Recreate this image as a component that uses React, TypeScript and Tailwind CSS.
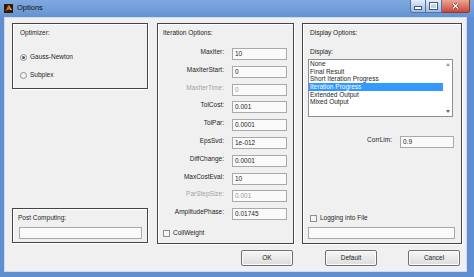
import React from 'react';

interface FieldDef {
  label: string;
  value: string;
  disabled?: boolean;
}

const iterFields: FieldDef[] = [
  { label: 'MaxIter:', value: '10' },
  { label: 'MaxIterStart:', value: '0' },
  { label: 'MaxIterTime:', value: '0', disabled: true },
  { label: 'TolCost:', value: '0.001' },
  { label: 'TolPar:', value: '0.0001' },
  { label: 'EpsSvd:', value: '1e-012' },
  { label: 'DiffChange:', value: '0.0001' },
  { label: 'MaxCostEval:', value: '10' },
  { label: 'ParStepSize:', value: '0.001', disabled: true },
  { label: 'AmplitudePhase:', value: '0.01745' },
];

const displayItems = [
  'None',
  'Final Result',
  'Short Iteration Progress',
  'Iteration Progress',
  'Extended Output',
  'Mixed Output',
];

const panel = 'border border-[#454545] shadow-[inset_1px_1px_0_#ffffff,1px_1px_0_#ffffff]';
const edit = 'h-[12px] border border-[#a9a9a9] bg-[#fafafa] pl-[2px] leading-[10px]';

const Radio = ({ checked, label }: { checked?: boolean; label: string }) => (
  <div className="flex items-center h-[8px]">
    <div className="w-[7px] h-[7px] rounded-full border border-[#8e8f8f] bg-[#f4f4f4] flex items-center justify-center">
      {checked && <div className="w-[3px] h-[3px] rounded-full bg-[#3b5f86]" />}
    </div>
    <span className="ml-[3px]">{label}</span>
  </div>
);

const Check = ({ label }: { label: string }) => (
  <div className="flex items-center h-[8px]">
    <div className="w-[7px] h-[7px] border border-[#8e8f8f] bg-[#f4f4f4]" />
    <span className="ml-[3px]">{label}</span>
  </div>
);

const Button = ({ label, className }: { label: string; className?: string }) => (
  <div
    className={
      'w-[52px] h-[16px] rounded-[2px] border border-[#707070] bg-linear-to-b from-[#f6f6f6] to-[#dcdcdc] flex items-center justify-center shadow-[inset_0_0_0_1px_#fcfcfc] ' +
      (className || '')
    }
  >
    {label}
  </div>
);

const App: React.FC = () => {
  return (
    <div className="w-[474px] h-[277px] bg-[#5f8fd1] flex flex-col overflow-hidden font-['Liberation_Sans',Arial,sans-serif] text-[6.5px] leading-[8px] text-[#1e1e1e]">
      {/* Title bar */}
      <div className="h-[17px] flex items-start bg-linear-to-b from-[#7fa9df] to-[#6593d3]">
        <svg width="9" height="9" viewBox="0 0 9 9" className="ml-[4px] mt-[4px]">
          <rect width="9" height="9" fill="#2a1a10" />
          <path d="M1 7 C3 6 3 2 5 1 C6 3 7 5 8 6 C6 5 4 6 1 7 Z" fill="#e8651c" />
          <path d="M5 1 C6 3 7 5 8 6 L6 6 Z" fill="#f4b14a" />
        </svg>
        <span className="ml-[4px] mt-[4px] text-[7.5px] text-[#111]">Options</span>
        <div className="flex-1" />
        <div className="flex mr-[4px]">
          <div className="w-[16px] h-[13px] rounded-bl-[3px] border border-t-0 border-[#4f74a6] bg-linear-to-b from-[#e4edf8] to-[#9fbbe0] flex items-center justify-center">
            <div className="w-[6px] h-[2px] mt-[4px] bg-white border border-[#445a7a] box-content" />
          </div>
          <div className="w-[16px] h-[13px] border border-t-0 border-l-0 border-[#4f74a6] bg-linear-to-b from-[#e4edf8] to-[#9fbbe0] flex items-center justify-center">
            <div className="w-[7px] h-[6px] border-[1.5px] border-white outline outline-[#445a7a]" />
          </div>
          <div className="w-[28px] h-[13px] rounded-br-[3px] border border-t-0 border-l-0 border-[#8a3a30] bg-linear-to-b from-[#eba595] to-[#c9453b] flex items-center justify-center">
            <svg width="7" height="6" viewBox="0 0 7 6">
              <path d="M1 0.5 L6 5.5 M6 0.5 L1 5.5" stroke="#5a1a14" strokeWidth="2.4" />
              <path d="M1 0.5 L6 5.5 M6 0.5 L1 5.5" stroke="#ffffff" strokeWidth="1.4" />
            </svg>
          </div>
        </div>
      </div>

      {/* Client area */}
      <div className="flex-1 mx-[4px] mr-[7px] mb-[5px] bg-[#f0f0f0] border border-[#cfdcec] flex flex-col">
        <div className="flex pl-[7px] pt-[5px]">
          {/* Left column */}
          <div className="w-[136px] flex flex-col">
            <div className={panel + ' h-[66px] pl-[7px] pt-[5px]'}>
              <div>Optimizer:</div>
              <div className="mt-[16px]">
                <Radio checked label="Gauss-Newton" />
              </div>
              <div className="mt-[10px]">
                <Radio label="Subplex" />
              </div>
            </div>
            <div className={panel + ' h-[35px] mt-[119px] pl-[5px] pt-[5px]'}>
              <div>Post Computing:</div>
              <div className={edit + ' mt-[5px] ml-[1px] w-[123px] h-[11px]'} />
            </div>
          </div>

          {/* Iteration options */}
          <div className={panel + ' w-[137px] h-[221px] ml-[9px] pt-[5px]'}>
            <div className="pl-[5px]">Iteration Options:</div>
            <div className="mt-[11px] flex flex-col gap-[5.8px]">
              {iterFields.map(f => (
                <div key={f.label} className="flex h-[12px]">
                  <div className={'w-[66px] text-right ' + (f.disabled ? 'text-[#a3a3a3]' : '')}>{f.label}</div>
                  <div className={edit + ' w-[55px] ml-[8px] ' + (f.disabled ? 'text-[#9c9c9c]' : '')}>{f.value}</div>
                </div>
              ))}
            </div>
            <div className="mt-[9px] pl-[5px]">
              <Check label="CollWeight" />
            </div>
          </div>

          {/* Display options */}
          <div className={panel + ' w-[160px] h-[221px] ml-[8px] pt-[5px]'}>
            <div className="pl-[7px]">Display Options:</div>
            <div className="pl-[7px] mt-[11px]">Display:</div>
            <div className="ml-[5px] mt-[3px] w-[145px] h-[58px] border border-[#8a8f96] bg-white flex">
              <div className="flex-1 flex flex-col">
                {displayItems.map(item => (
                  <div
                    key={item}
                    className={
                      'h-[7.7px] leading-[7.7px] pl-[1px] ' +
                      (item === 'Iteration Progress' ? 'bg-[#3399ff] text-white' : '')
                    }
                  >
                    {item}
                  </div>
                ))}
              </div>
              <div className="w-[9px] flex flex-col items-center justify-between py-[3px]">
                <svg width="4" height="3" viewBox="0 0 4 3">
                  <path d="M0 3 L2 0 L4 3 Z" fill="#9a9a9a" />
                </svg>
                <svg width="4" height="3" viewBox="0 0 4 3">
                  <path d="M0 0 L2 3 L4 0 Z" fill="#6a6a6a" />
                </svg>
              </div>
            </div>
            <div className="flex h-[12px] mt-[19px]">
              <div className="w-[89px] text-right">CorrLim:</div>
              <div className={edit + ' w-[54px] ml-[8px]'}>0.9</div>
            </div>
            <div className="mt-[66px] pl-[7px]">
              <Check label="Logging into File" />
            </div>
            <div className={edit + ' ml-[5px] mt-[5px] w-[147px]'} />
          </div>
        </div>

        {/* Buttons */}
        <div className="flex mt-[6px] ml-[236px]">
          <Button label="OK" />
          <Button label="Default" className="ml-[32px]" />
          <Button label="Cancel" className="ml-[31px]" />
        </div>
      </div>
    </div>
  );
};

export default App;
